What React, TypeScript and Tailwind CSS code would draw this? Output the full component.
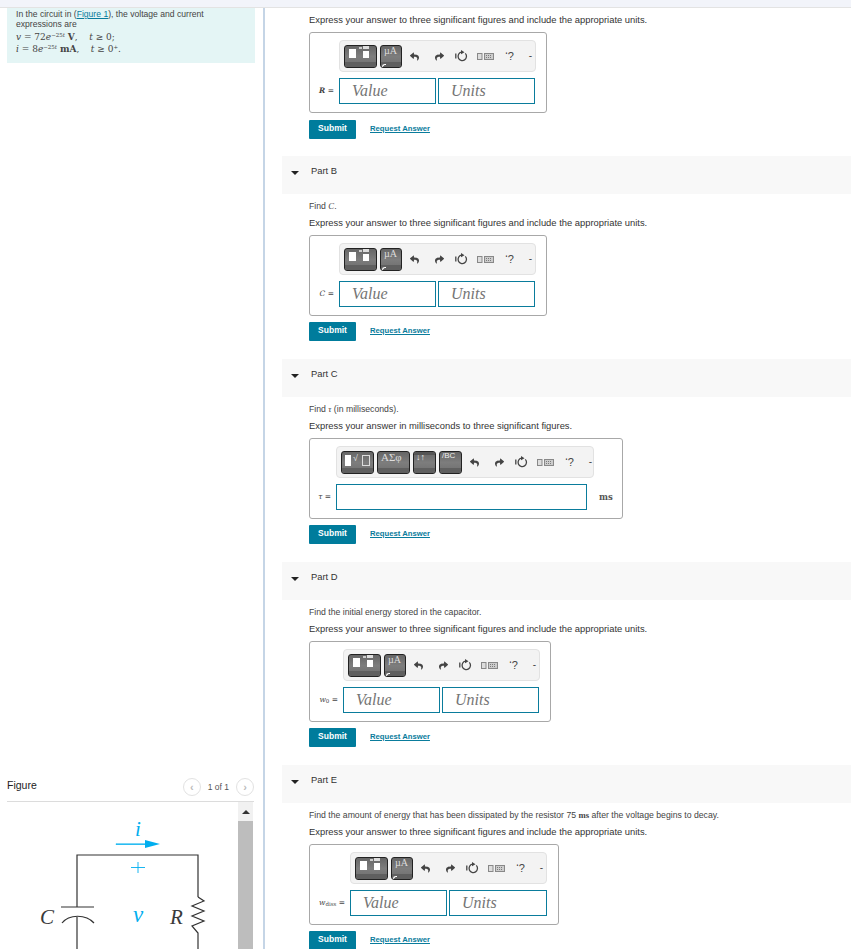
import React from "react";
import { FaReply, FaShare } from "react-icons/fa";

const serif = "font-['Liberation_Serif',serif]";
const slab = "font-['DejaVu_Serif',serif]";

function Reset() {
  return (
    <svg width="14" height="12" viewBox="0 0 14 12" fill="none" stroke="#444" strokeWidth="1.3" className="shrink-0">
      <path d="M0.8 3.5V8.5" />
      <path d="M6.5 2.2a4.2 4.2 0 1 0 3.8 1.2" />
      <path d="M6 0L9.5 2.2L6 4.2Z" fill="#444" stroke="none" />
    </svg>
  );
}

function Keyboard() {
  return (
    <svg width="17" height="7" viewBox="0 0 17 7" fill="none" className="shrink-0">
      <rect x="0.5" y="0.5" width="4.5" height="6" fill="#ddd" stroke="#888" />
      <rect x="7.5" y="0.5" width="9" height="6" fill="#ccc" stroke="#888" />
      <path d="M9 2.5h6M9 4.5h6" stroke="#666" strokeWidth="0.8" strokeDasharray="1 1" />
    </svg>
  );
}

function Btn({ w, children }: { w: string; children?: React.ReactNode }) {
  return (
    <div className={`relative overflow-hidden shrink-0 h-[23px] ${w} rounded-[3px] border border-[#222] bg-gradient-to-b from-[#666666] via-[#7d7d7d] to-[#6e6e6e]`}>
      <div className="absolute left-0 right-0 bottom-0 h-[5px] bg-[#5f5f5f]" />
      {children}
    </div>
  );
}

function Toolbar({ extended }: { extended?: boolean }) {
  return (
    <div className="flex items-center h-[32px] pl-[4px] bg-[#f3f3f3] border border-[#e2e2e2] rounded-[4px]">
      {extended ? (
        <div className="flex gap-[3px]">
          <Btn w="w-[33px]">
            <div className="absolute left-[3px] top-[3px] w-[6px] h-[11px] bg-white" />
            <div className="absolute left-[11px] top-[1px] text-[9px] leading-[11px] text-[#ddd]">√</div>
            <div className="absolute left-[20px] top-[3px] w-[8px] h-[11px] border border-[#ddd]" />
          </Btn>
          <Btn w="w-[33px]">
            <div className={`absolute left-[3px] -top-[1px] text-[11px] leading-[13px] text-[#ddd] ${serif}`}>ΑΣφ</div>
          </Btn>
          <Btn w="w-[23px]">
            <div className="absolute left-[2px] top-[0px] text-[9px] leading-[11px] text-[#eee]">↓↑</div>
            <div className="absolute left-0 right-0 top-0 h-[3px] bg-[#555]" />
          </Btn>
          <Btn w="w-[23px]">
            <div className="absolute left-[2px] -top-[1px] text-[8px] leading-[10px] text-[#eee]">/BC</div>
          </Btn>
        </div>
      ) : (
        <div className="flex gap-[3px]">
          <Btn w="w-[33px]">
            <div className="absolute left-[4px] top-[3px] w-[7px] h-[9px] bg-white" />
            <div className="absolute left-[14px] top-[1px] w-[3px] h-[2px] border border-[#ccc]" />
            <div className="absolute left-[18px] top-[0px] w-[6px] h-[3px] bg-[#ddd]" />
            <div className="absolute left-[18px] top-[5px] w-[6px] h-[7px] bg-white" />
          </Btn>
          <Btn w="w-[22px]">
            <div className={`absolute left-[3px] -top-[1px] text-[10px] leading-[12px] text-[#ddd] ${serif}`}>µA</div>
            <div className="absolute left-[1px] bottom-0 w-[4px] h-[3px] border-t border-l border-white rounded-tl-[3px]" />
          </Btn>
        </div>
      )}
      <div className="ml-auto flex items-center text-[#444]">
        <span className="w-[30px] flex justify-end pr-[13px]"><FaReply size={9} /></span>
        <span className="w-[14px] flex justify-center"><FaShare size={9} /></span>
        <span className="w-[31px] flex justify-center"><Reset /></span>
        <span className="w-[16px] flex justify-center"><Keyboard /></span>
        <span className="w-[33px] text-center text-[11px] leading-[12px]">‘?</span>
        <span className="w-[9px] text-center text-[10px] leading-[12px]">-</span>
      </div>
    </div>
  );
}

function Field({ ph, w }: { ph?: string; w: string }) {
  return (
    <div className={`h-[26px] ${w} border border-[#0a7c9c] pl-[12px] bg-white text-[16px] leading-[23px] italic text-[#757575] ${serif}`}>
      {ph}
    </div>
  );
}

function SubmitRow() {
  return (
    <div className="flex items-center mt-[6px] h-[19px]">
      <div className="w-[47px] h-[19px] rounded-[1px] bg-[#007c9c] text-white text-[8.5px] font-bold leading-[17px] text-center">Submit</div>
      <div className="ml-[14px] -mt-[2px] text-[7.7px] font-bold text-[#0a7c9c] underline">Request Answer</div>
    </div>
  );
}

function Box({ label, boxW, labelW }: { label: React.ReactNode; boxW: string; labelW: string }) {
  return (
    <div className={`${boxW} h-[81px] pt-[7px] pr-[11px] border border-[#a8a8a8] rounded-[3px] bg-white flex flex-col`}>
      <div className="flex">
        <div className={`${labelW} shrink-0`} />
        <div className="flex-1"><Toolbar /></div>
      </div>
      <div className="flex mt-[6px]">
        <div className={`${labelW} shrink-0 pr-[5px] text-right text-[7.5px] leading-[26px] text-[#444] whitespace-nowrap ${slab}`}>{label}</div>
        <div className="flex gap-[2px] flex-1">
          <Field ph="Value" w="w-[97px]" />
          <Field ph="Units" w="flex-1" />
        </div>
      </div>
    </div>
  );
}

function PartHead({ name }: { name: string }) {
  return (
    <div className="h-[38px] flex items-center bg-[#f8f8f8] text-[9.4px] text-[#333] pb-[7px]">
      <div className="ml-[9px] mt-[3px] w-0 h-0 border-l-[4px] border-r-[4px] border-t-[4px] border-l-transparent border-r-transparent border-t-[#222]" />
      <div className="ml-[12px]">{name}</div>
    </div>
  );
}

function Line({ children, cls }: { children: React.ReactNode; cls?: string }) {
  return <div className={`h-[14px] leading-[14px] whitespace-nowrap ${cls ?? ""}`}>{children}</div>;
}

const Express = "Express your answer to three significant figures and include the appropriate units.";

function Part({ name, find, express, children }: { name: string; find: React.ReactNode; express?: string; children: React.ReactNode }) {
  return (
    <div className="mt-[18px]">
      <PartHead name={name} />
      <div className="pl-[27px]">
        <Line cls="mt-[5px] text-[8.7px] text-[#444]">{find}</Line>
        <Line cls="mt-[3px] text-[9.4px] text-[#333]">{express ?? Express}</Line>
        <div className="mt-[5px]">{children}</div>
        <SubmitRow />
      </div>
    </div>
  );
}

function Nav({ dir }: { dir: "<" | ">" }) {
  return (
    <div className="w-[18px] h-[18px] rounded-full border border-[#e2e2e2] flex items-center justify-center text-[11px] font-bold leading-none text-[#bbb]">
      {dir === "<" ? "‹" : "›"}
    </div>
  );
}

function Circuit() {
  return (
    <svg width="231" height="147" viewBox="0 0 231 147" className="block">
      <g fill="none" stroke="#333" strokeWidth="1.2">
        <path d="M70 105V53H191V95" />
        <path d="M191 95L197 99L185 104L197 109L185 114L197 119L185 124L191 131V147" />
        <path d="M54 105H87" />
        <path d="M55 121C62 112 79 112 87 121" />
        <path d="M70 115V147" />
      </g>
      <g fill="#00aeef">
        <path d="M109 42.500H140V41.800H109Z" stroke="#00aeef" strokeWidth="0.6" />
        <path d="M138 38L153 42L138 46Z" />
      </g>
      <path d="M131 60V71M124 65.500H138" stroke="#00aeef" strokeWidth="0.9" fill="none" />
      <text x="131" y="34" fontFamily="Liberation Serif, serif" fontStyle="italic" fontSize="21" fill="#00aeef" textAnchor="middle">i</text>
      <text x="131" y="120" fontFamily="Liberation Serif, serif" fontStyle="italic" fontSize="23" fill="#00aeef" textAnchor="middle">v</text>
      <text x="33" y="122" fontFamily="Liberation Serif, serif" fontStyle="italic" fontSize="21" fill="#3a3a3a">C</text>
      <text x="163" y="122" fontFamily="Liberation Serif, serif" fontStyle="italic" fontSize="21" fill="#3a3a3a">R</text>
    </svg>
  );
}

export default function App() {
  return (
    <div className="w-[851px] h-[949px] overflow-hidden bg-white flex flex-col font-['Liberation_Sans',sans-serif] text-[8.5px]">
      <div className="h-[8px] shrink-0 bg-[#f2f4fa] border-b border-[#e3e3e3]" />
      <div className="flex flex-1 min-h-0">
        <div className="w-[265px] shrink-0 border-r-2 border-[#c5d5e6] flex flex-col justify-between">
          <div className="ml-[7px] w-[248px] h-[55px] bg-[#e4f5f5] pl-[9px] pt-[1px] text-[8.6px] text-[#444] leading-[10px]">
            <div>In the circuit in (<span className="text-[#0a7c9c] underline">Figure 1</span>), the voltage and current</div>
            <div>expressions are</div>
            <div className={`${slab} text-[9px] leading-[12px] mt-[2px] whitespace-pre`}>
              <i>v</i> = 72<i>e</i><sup className="text-[5.5px] leading-[0]">−25<i>t</i></sup> <b>V</b>,    <i>t</i> ≥ 0;
            </div>
            <div className={`${slab} text-[9px] leading-[12px] whitespace-pre`}>
              <i>i</i> = 8<i>e</i><sup className="text-[5.5px] leading-[0]">−25<i>t</i></sup> <b>mA</b>,    <i>t</i> ≥ 0<sup className="text-[5.5px] leading-[0]">+</sup>.
            </div>
          </div>
          <div className="ml-[7px] w-[247px]">
            <div className="h-[27px] flex items-center border-b border-[#dcdcdc] pb-[3px]">
              <div className="text-[10.5px] text-[#222] -mt-[2px]">Figure</div>
              <div className="ml-auto mt-[1px] flex items-center gap-[7px] text-[8.5px] text-[#555]">
                <Nav dir="<" />
                <span>1 of 1</span>
                <Nav dir=">" />
              </div>
            </div>
            <div className="flex h-[147px]">
              <Circuit />
              <div className="w-[15px] shrink-0 flex flex-col">
                <div className="h-[19px] bg-[#f1f1f1] flex items-center justify-center">
                  <div className="w-0 h-0 border-l-[4px] border-r-[4px] border-b-[4px] border-l-transparent border-r-transparent border-b-[#333]" />
                </div>
                <div className="flex-1 bg-[#bdbdbd]" />
              </div>
            </div>
          </div>
        </div>
        <div className="flex-1 min-w-0 pl-[17px]">
          <div className="pl-[27px] -mb-[1px]">
            <Line cls="mt-[5px] text-[9.4px] text-[#333]">{Express}</Line>
            <div className="mt-[5px] pb-[1px]">
              <Box boxW="w-[238px]" labelW="w-[29px]" label={<><b><i>R</i></b> =</>} />
            </div>
            <SubmitRow />
          </div>
          <Part name="Part B" find={<>Find <i className={serif}>C</i>.</>}>
            <Box boxW="w-[238px]" labelW="w-[29px]" label={<><i>C</i> =</>} />
          </Part>
          <Part name="Part C" find={<>Find <i className={serif}>τ</i> (in milliseconds).</>} express="Express your answer in milliseconds to three significant figures.">
            <div className="w-[314px] h-[81px] pt-[7px] border border-[#a8a8a8] rounded-[3px] flex flex-col">
              <div className="w-[258px] ml-[26px]"><Toolbar extended /></div>
              <div className="flex mt-[6px]">
                <div className={`w-[26px] shrink-0 pr-[5px] text-right text-[7.5px] leading-[26px] text-[#444] whitespace-nowrap ${slab}`}><i>τ</i> =</div>
                <div className="w-[251px] h-[26px] border border-[#0a7c9c]" />
                <div className={`ml-[12px] text-[8.5px] font-bold leading-[26px] text-[#555] ${slab}`}>ms</div>
              </div>
            </div>
          </Part>
          <Part name="Part D" find="Find the initial energy stored in the capacitor.">
            <Box boxW="w-[242px]" labelW="w-[33px]" label={<><i>w</i><sub className="text-[5.5px] leading-[0]">0</sub> =</>} />
          </Part>
          <Part name="Part E" find={<>Find the amount of energy that has been dissipated by the resistor 75 <b className={serif}>ms</b> after the voltage begins to decay.</>}>
            <Box boxW="w-[250px]" labelW="w-[40px]" label={<><i>w</i><sub className="text-[5.5px] leading-[0]">diss</sub> =</>} />
          </Part>
        </div>
      </div>
    </div>
  );
}
